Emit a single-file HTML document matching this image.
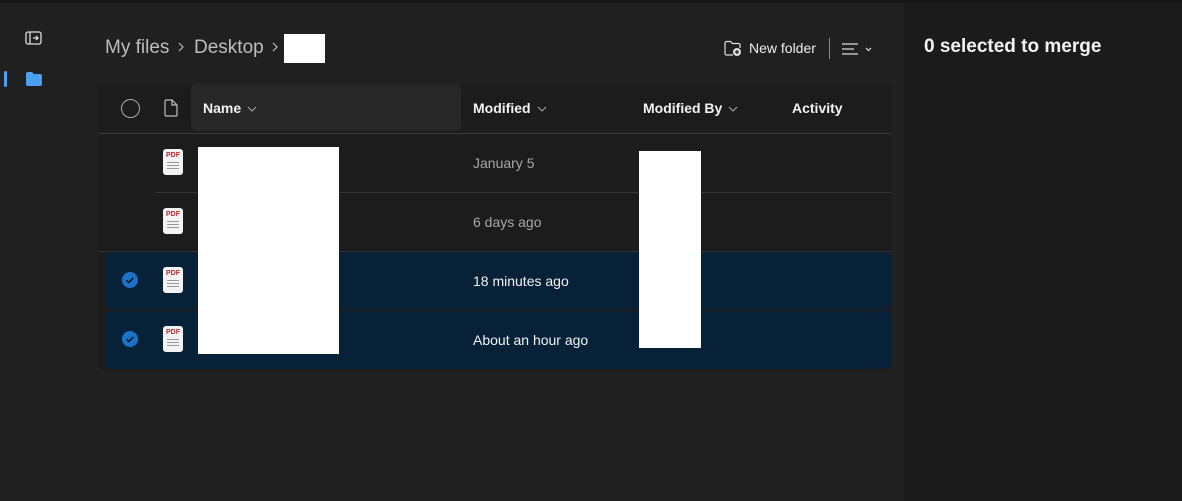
<!DOCTYPE html>
<html><head><meta charset="utf-8"><style>
*{margin:0;padding:0;box-sizing:border-box}
body{width:1182px;height:501px;overflow:hidden;background:#202020;font-family:"Segoe UI","Liberation Sans",sans-serif;color:#fff;position:relative}
.abs{position:absolute}
.txt{font-size:14px;white-space:nowrap}
.hdr{font-size:14px;font-weight:bold;white-space:nowrap;color:#f2f2f2}
.line{position:absolute;height:1px;background:#333}
.pdf{position:absolute;width:20px;height:26px;background:#f3f3f3;border-radius:3px}
.pdf b{position:absolute;left:3px;top:3px;font-size:7px;color:#c4262e;font-family:"Liberation Sans",sans-serif;font-weight:bold}
.pdf i{position:absolute;left:4px;width:12px;height:1px;background:#999}
.chk{position:absolute;width:16px;height:16px;border-radius:50%;background:#1a73c9}
.cv{display:inline-block;vertical-align:middle;margin-left:6px}
</style></head><body>
<div class="abs" style="left:0;top:0;width:1182px;height:3px;background:#171717"></div>
<div class="abs" style="left:904px;top:3px;width:278px;height:498px;background:#1b1b1b"></div>
<svg class="abs" style="left:25px;top:31px" width="18" height="15" viewBox="0 0 18 15"><rect x="1" y="1" width="15" height="12" rx="2" fill="none" stroke="#ddd" stroke-width="1.3"/><line x1="5" y1="1" x2="5" y2="13" stroke="#ddd" stroke-width="1.3"/><path d="M8 7h5M11 5l2 2-2 2" stroke="#ddd" stroke-width="1.3" fill="none"/></svg>
<div class="abs" style="left:4px;top:71px;width:3px;height:16px;background:#4ca0f0;border-radius:2px"></div>
<svg class="abs" style="left:25px;top:71px" width="18" height="16" viewBox="0 0 18 16"><path d="M1 3a2 2 0 0 1 2-2h4l2 2h6a2 2 0 0 1 2 2v8a2 2 0 0 1-2 2H3a2 2 0 0 1-2-2z" fill="#4ca0f0"/></svg>
<div class="abs" style="left:105px;top:37px;font-size:19px;color:#bdbdbd;white-space:nowrap">My files</div>
<svg class="abs" style="left:177px;top:41px" width="8" height="12"><path d="M2 2l4 4-4 4" stroke="#bbb" stroke-width="1.2" fill="none"/></svg>
<div class="abs" style="left:194px;top:37px;font-size:19px;color:#bdbdbd">Desktop</div>
<svg class="abs" style="left:271px;top:41px" width="8" height="12"><path d="M2 2l4 4-4 4" stroke="#bbb" stroke-width="1.2" fill="none"/></svg>
<div class="abs" style="left:284px;top:34px;width:41px;height:29px;background:#fff"></div>
<svg class="abs" style="left:724px;top:40px" width="18" height="17" viewBox="0 0 18 17"><path d="M1 3a1.5 1.5 0 0 1 1.5-1.5h4l2 2h6a1.5 1.5 0 0 1 1.5 1.5v3M9 15H2.5A1.5 1.5 0 0 1 1 13.5V3" fill="none" stroke="#ddd" stroke-width="1.2"/><circle cx="13" cy="12" r="4" fill="#ddd"/><path d="M13 10v4M11 12h4" stroke="#202020" stroke-width="1.2"/></svg>
<div class="abs txt" style="left:749px;top:40px;color:#eee">New folder</div>
<div class="abs" style="left:829px;top:38px;width:1px;height:21px;background:#888"></div>
<svg class="abs" style="left:841px;top:43px" width="34" height="12" viewBox="0 0 34 12"><path d="M1 1h16M1 6h12M1 11h16" stroke="#ddd" stroke-width="1.2"/><path d="M25 5l2.5 2.5L30 5" stroke="#ddd" stroke-width="1.2" fill="none"/></svg>
<div class="abs" style="left:924px;top:36px;font-size:19px;font-weight:bold;color:#f2f2f2;white-space:nowrap">0 selected to merge</div>
<div class="abs" style="left:98px;top:84px;width:793px;height:286px;background:#1c1c1c;border-radius:6px"></div>
<div class="abs" style="left:191px;top:84px;width:270px;height:47px;background:#272727;border-radius:5px"></div>
<div class="abs" style="left:121px;top:99px;width:19px;height:19px;border:1.5px solid #aaa;border-radius:50%"></div>
<svg class="abs" style="left:164px;top:99px" width="14" height="18" viewBox="0 0 14 18"><path d="M1 2a1 1 0 0 1 1-1h6l5 5v10a1 1 0 0 1-1 1H2a1 1 0 0 1-1-1zM8 1v5h5" fill="none" stroke="#bbb" stroke-width="1.2"/></svg>
<div class="abs hdr" style="left:203px;top:100px">Name<svg class="cv" width="10" height="8"><path d="M1 2l4 4 4-4" stroke="#aaa" stroke-width="1" fill="none"/></svg></div>
<div class="abs hdr" style="left:473px;top:100px">Modified<svg class="cv" width="10" height="8"><path d="M1 2l4 4 4-4" stroke="#aaa" stroke-width="1" fill="none"/></svg></div>
<div class="abs hdr" style="left:643px;top:100px">Modified By<svg class="cv" width="10" height="8"><path d="M1 2l4 4 4-4" stroke="#aaa" stroke-width="1" fill="none"/></svg></div>
<div class="abs hdr" style="left:792px;top:100px">Activity</div>
<div class="line" style="left:98px;top:133px;width:793px;background:#3a3a3a"></div>
<div class="line" style="left:155px;top:192px;width:736px"></div>
<div class="line" style="left:98px;top:251px;width:793px"></div>
<div class="abs" style="left:106px;top:252px;width:785px;height:57px;background:#072238;border-radius:5px"></div>
<div class="abs" style="left:106px;top:311px;width:785px;height:58px;background:#072238;border-radius:5px"></div>
<div class="pdf" style="left:163px;top:149px"><b>PDF</b><i style="top:13px"></i><i style="top:16px"></i><i style="top:19px"></i></div>
<div class="pdf" style="left:163px;top:208px"><b>PDF</b><i style="top:13px"></i><i style="top:16px"></i><i style="top:19px"></i></div>
<div class="pdf" style="left:163px;top:267px"><b>PDF</b><i style="top:13px"></i><i style="top:16px"></i><i style="top:19px"></i></div>
<div class="pdf" style="left:163px;top:326px"><b>PDF</b><i style="top:13px"></i><i style="top:16px"></i><i style="top:19px"></i></div>
<div class="chk" style="left:122px;top:272px"><svg width="16" height="16"><path d="M4.5 8.2l2.3 2.3 4.5-4.5" stroke="#0b1a2a" stroke-width="1.6" fill="none"/></svg></div>
<div class="chk" style="left:122px;top:331px"><svg width="16" height="16"><path d="M4.5 8.2l2.3 2.3 4.5-4.5" stroke="#0b1a2a" stroke-width="1.6" fill="none"/></svg></div>
<div class="abs txt" style="left:473px;top:155px;color:#a8a8a8">January 5</div>
<div class="abs txt" style="left:473px;top:214px;color:#a8a8a8">6 days ago</div>
<div class="abs txt" style="left:473px;top:273px;color:#f2f2f2">18 minutes ago</div>
<div class="abs txt" style="left:473px;top:332px;color:#f2f2f2">About an hour ago</div>
<div class="abs" style="left:198px;top:147px;width:141px;height:207px;background:#fff"></div>
<div class="abs" style="left:639px;top:151px;width:62px;height:197px;background:#fff"></div>
</body></html>
